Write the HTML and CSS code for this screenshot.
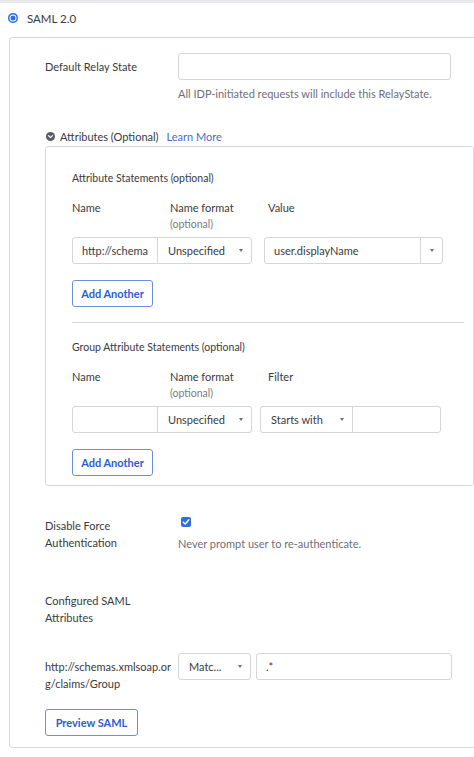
FILE: index.html
```html
<!DOCTYPE html>
<html lang="en">
<head>
    <meta charset="UTF-8">
    <meta name="viewport" content="width=device-width, initial-scale=1.0">
    <title>SAML Settings</title>
    <link rel="stylesheet" href="styles.css">
</head>
<body>
    <div class="topbar"></div>

    <label class="radio-row">
        <span class="radio"></span>
        SAML 2.0
    </label>

    <div class="panel">
        <div class="field">
            <div class="field-label">Default Relay State</div>
            <div class="field-body">
                <input type="text" class="text-input relay-input">
                <p class="hint">All IDP-initiated requests will include this RelayState.</p>
            </div>
        </div>

        <div class="attr-toggle">
            <span class="toggle-icon">
                <svg width="9" height="9" viewBox="0 0 10 10">
                    <circle cx="5" cy="5" r="5" fill="#5c5c66"/>
                    <path d="M2.8 4 L5 6.2 L7.2 4" fill="none" stroke="#fff" stroke-width="1.4" stroke-linecap="round" stroke-linejoin="round"/>
                </svg>
            </span>
            Attributes (Optional)
            <a href="#" class="link">Learn More</a>
        </div>

        <div class="attr-box">
            <section class="statements">
                <h3>Attribute Statements (optional)</h3>
                <div class="col-labels">
                    <span>Name</span>
                    <span>Name format<small>(optional)</small></span>
                    <span>Value</span>
                </div>
                <div class="input-row">
                    <input type="text" class="text-input name-input" value="http://schema">
                    <div class="select format-select"><span>Unspecified</span><span class="caret"></span></div>
                    <div class="combo">
                        <input type="text" class="text-input value-input" value="user.displayName">
                        <div class="combo-btn"><span class="caret"></span></div>
                    </div>
                </div>
                <button class="btn-outline">Add Another</button>
            </section>

            <hr class="divider">

            <section class="statements">
                <h3>Group Attribute Statements (optional)</h3>
                <div class="col-labels">
                    <span>Name</span>
                    <span>Name format<small>(optional)</small></span>
                    <span>Filter</span>
                </div>
                <div class="input-row">
                    <input type="text" class="text-input name-input">
                    <div class="select format-select"><span>Unspecified</span><span class="caret"></span></div>
                    <div class="select filter-select"><span>Starts with</span><span class="caret"></span></div>
                    <input type="text" class="text-input filter-input">
                </div>
                <button class="btn-outline">Add Another</button>
            </section>
        </div>

        <div class="field force-field">
            <div class="field-label multi">Disable Force Authentication</div>
            <div class="field-body">
                <span class="checkbox">
                    <svg width="8" height="8" viewBox="0 0 8 8">
                        <path d="M1.3 4.2 L3.2 6 L6.7 1.9" fill="none" stroke="#fff" stroke-width="1.5" stroke-linecap="round" stroke-linejoin="round"/>
                    </svg>
                </span>
                <p class="hint check-hint">Never prompt user to re-authenticate.</p>
            </div>
        </div>

        <div class="configured-title">Configured SAML<br>Attributes</div>

        <div class="field configured-row">
            <div class="field-label claim-name">http://schemas.xmlsoap.org/claims/Group</div>
            <div class="field-body inline">
                <div class="select match-select"><span>Matc...</span><span class="caret"></span></div>
                <input type="text" class="text-input match-input" value=".*">
            </div>
        </div>

        <button class="btn-outline preview-btn">Preview SAML</button>
    </div>
</body>
</html>
```

FILE: styles.css
```css
* {
    margin: 0;
    padding: 0;
    box-sizing: border-box;
}

body {
    font-family: Lato, "Liberation Sans", sans-serif;
    font-size: 11px;
    line-height: 17px;
    color: #3a3a40;
    background-color: #fff;
    width: 474px;
    overflow: hidden;
}

.topbar {
    height: 3px;
    background-color: #e8e8ea;
}

.radio-row {
    display: flex;
    align-items: center;
    gap: 9px;
    height: 30px;
    padding-left: 8px;
    font-size: 11.5px;
}

.radio {
    width: 10px;
    height: 10px;
    border-radius: 50%;
    background-color: #2f6fe4;
    box-shadow: inset 0 0 0 1.5px #2f6fe4, inset 0 0 0 2.5px #fff;
}

.panel {
    margin: 4px 0 0 9px;
    width: 480px;
    border: 1px solid #d9d9dd;
    border-radius: 3px;
    padding: 15px 0 11px 35px;
}

.field {
    display: grid;
    grid-template-columns: 133px 1fr;
}

.field-label {
    line-height: 27px;
}

.field-label.multi {
    line-height: 17px;
    width: 90px;
}

.text-input {
    height: 27px;
    border: 1px solid #d5d5da;
    border-radius: 3px;
    padding: 0 9px;
    font-family: inherit;
    font-size: 11px;
    color: #3a3a40;
    background-color: #fff;
    outline: none;
}

.relay-input {
    width: 273px;
}

.hint {
    margin-top: 5px;
    line-height: 18px;
    color: #6e6e78;
}

.attr-toggle {
    display: flex;
    align-items: center;
    margin-top: 25px;
    margin-left: 1px;
    margin-bottom: 1px;
}

.toggle-icon {
    display: flex;
    margin-right: 5px;
}

.link {
    margin-left: 8px;
    color: #4b6cc8;
    text-decoration: none;
}

.attr-box {
    width: 429px;
    border: 1px solid #d9d9dd;
    border-radius: 3px;
    padding: 23px 9px 9px 26px;
}

.statements h3 {
    font-size: 10.5px;
    font-weight: normal;
}

.col-labels {
    display: flex;
    margin-top: 12px;
}

.col-labels span {
    width: 98px;
}

.col-labels small {
    display: block;
    font-size: 10.5px;
    color: #7a7a82;
}

.input-row {
    display: flex;
    margin-top: 4px;
}

.select {
    display: flex;
    align-items: center;
    justify-content: space-between;
    height: 27px;
    border: 1px solid #d5d5da;
    border-radius: 3px;
    padding: 0 8px 0 10px;
    background-color: #fff;
}

.caret {
    width: 0;
    height: 0;
    border-left: 2.5px solid transparent;
    border-right: 2.5px solid transparent;
    border-top: 3px solid #6e6e76;
}

.name-input {
    width: 86px;
    border-radius: 3px 0 0 3px;
}

.format-select {
    width: 95px;
    margin-left: -1px;
    border-radius: 0 3px 3px 0;
}

.combo {
    display: flex;
    margin-left: 12px;
}

.value-input {
    width: 157px;
    border-radius: 3px 0 0 3px;
}

.combo-btn {
    display: flex;
    align-items: center;
    justify-content: center;
    width: 23px;
    height: 27px;
    margin-left: -1px;
    border: 1px solid #d5d5da;
    border-radius: 0 3px 3px 0;
}

.filter-select {
    width: 93px;
    margin-left: 8px;
    border-radius: 3px 0 0 3px;
}

.filter-input {
    width: 89px;
    margin-left: -1px;
    border-radius: 0 3px 3px 0;
}

.btn-outline {
    display: block;
    height: 27px;
    margin-top: 16px;
    padding: 0 9px;
    border: 1px solid #6a8fdc;
    border-radius: 3px;
    background-color: #fff;
    color: #2d5dcf;
    font-family: inherit;
    font-size: 11px;
    font-weight: bold;
    cursor: pointer;
}

.statements .btn-outline {
    width: 81px;
    padding: 0;
}

.divider {
    border: none;
    border-top: 1px solid #d5d5da;
    margin-top: 15px;
}

.divider + .statements h3 {
    margin-top: 16px;
}

.force-field {
    margin-top: 31px;
}

.checkbox {
    display: flex;
    align-items: center;
    justify-content: center;
    width: 10px;
    height: 10px;
    margin-left: 3px;
    border-radius: 2px;
    background-color: #2f6fe4;
}

.check-hint {
    margin-top: 8px;
}

.configured-title {
    margin-top: 39px;
}

.configured-row {
    margin-top: 27px;
}

.claim-name {
    line-height: 17px;
    padding-top: 5px;
    padding-right: 4px;
    word-break: break-all;
}

.field-body.inline {
    display: flex;
    gap: 5px;
    align-items: flex-start;
}

.match-select {
    width: 73px;
}

.match-input {
    width: 196px;
}

.preview-btn {
    margin-top: 17px;
    width: 93px;
    padding: 0;
}
```
